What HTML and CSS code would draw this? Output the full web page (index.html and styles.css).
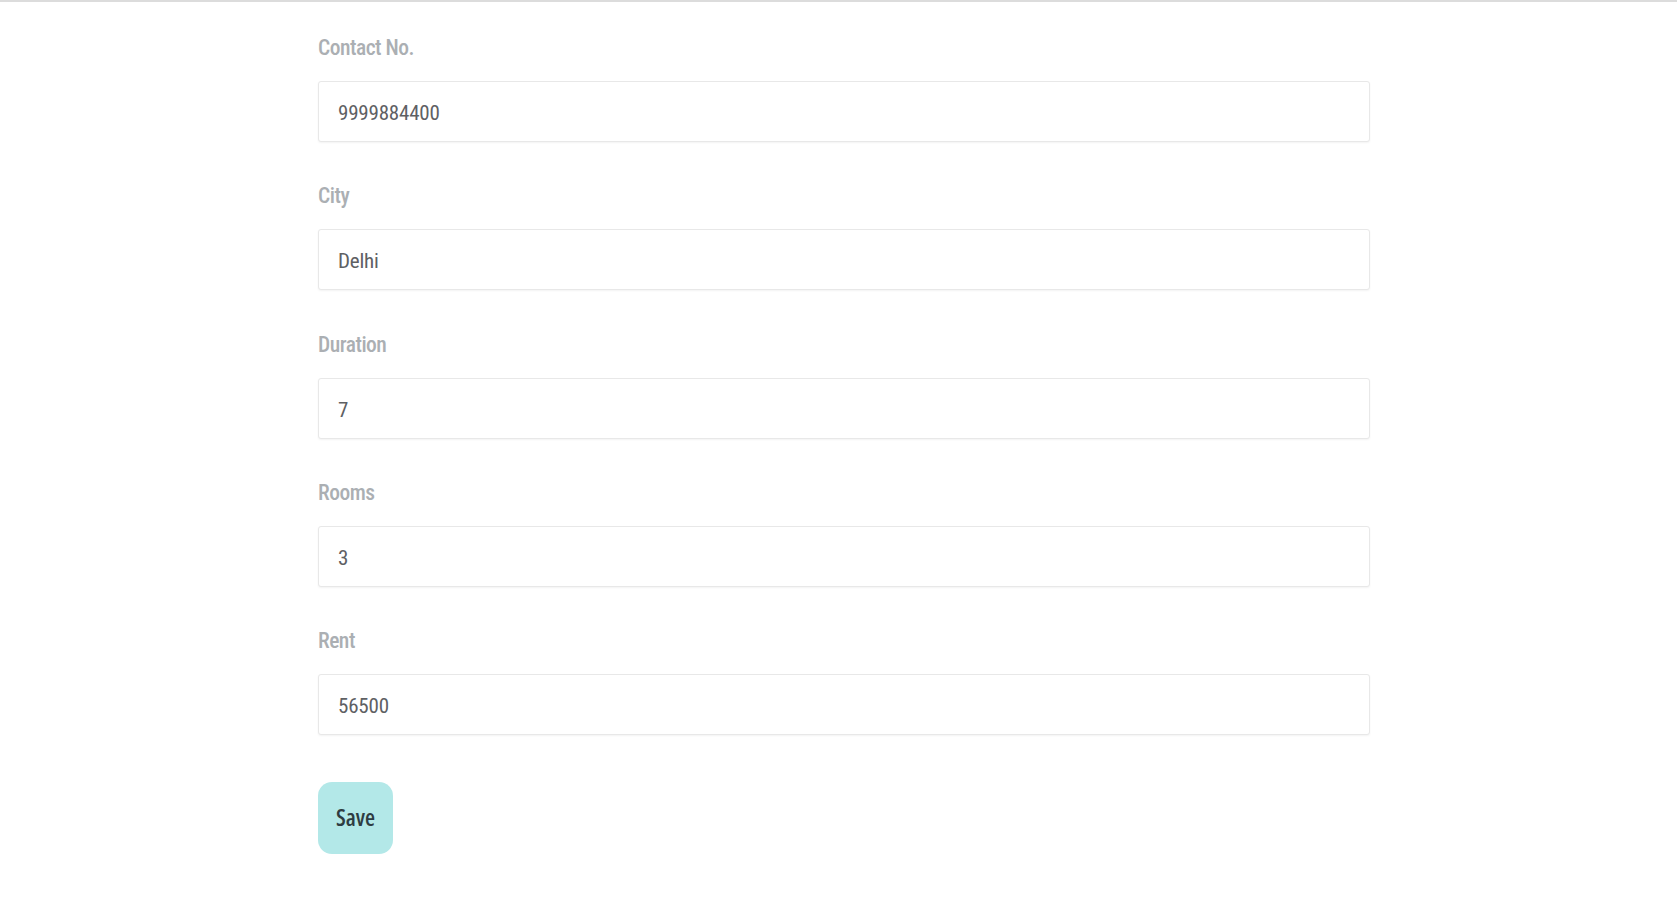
FILE: index.html
```html
<!DOCTYPE html>
<html lang="en">
<head>
<meta charset="utf-8">
<title>Edit Property</title>
<link rel="stylesheet" href="styles.css">
</head>
<body>
<div class="page">
  <form class="form">
    <div class="field">
      <label class="label" for="contact">Contact No.</label>
      <input class="input" id="contact" type="text" value="9999884400">
    </div>
    <div class="field">
      <label class="label" for="city">City</label>
      <input class="input" id="city" type="text" value="Delhi">
    </div>
    <div class="field">
      <label class="label" for="duration">Duration</label>
      <input class="input" id="duration" type="text" value="7">
    </div>
    <div class="field">
      <label class="label" for="rooms">Rooms</label>
      <input class="input" id="rooms" type="text" value="3">
    </div>
    <div class="field">
      <label class="label" for="rent">Rent</label>
      <input class="input" id="rent" type="text" value="56500">
    </div>
    <button class="btn-save" type="button">Save</button>
  </form>
</div>
</body>
</html>
```

FILE: styles.css
```css
html, body {
  margin: 0;
  padding: 0;
  background: #ffffff;
}

body {
  font-family: Roboto, "DejaVu Sans Condensed", sans-serif;
  font-stretch: 75%;
}

.page {
  border-top: 2px solid #dcdcdc;
  min-height: 900px;
  box-sizing: border-box;
}

.form {
  width: 1052px;
  margin-left: 318px;
  padding-top: 31px;
  display: flex;
  flex-direction: column;
  align-items: flex-start;
}

.field {
  width: 100%;
  display: flex;
  flex-direction: column;
  margin-bottom: 39.3px;
}

.label {
  display: block;
  padding-top: 2px;
  font-size: 21.5px;
  line-height: 26px;
  font-weight: 500;
  letter-spacing: -0.5px;
  color: #abafb3;
  margin-bottom: 20px;
}

.input {
  box-sizing: border-box;
  width: 100%;
  height: 61px;
  margin: 0;
  padding: 3px 19px 0 19px;
  border: 1px solid #e8e8e8;
  border-radius: 3px;
  box-shadow: 0 1px 2px rgba(0, 0, 0, 0.05);
  background: #ffffff;
  font-family: inherit;
  font-stretch: 75%;
  font-size: 21px;
  letter-spacing: -0.2px;
  color: #5e6063;
  outline: none;
}

.btn-save {
  margin-top: 8px;
  height: 72px;
  padding: 0 18px 3px;
  border: none;
  border-radius: 14px;
  background: #b3e8e8;
  color: #2e3c42;
  font-family: "Open Sans", sans-serif;
  font-stretch: 75%;
  font-size: 23px;
  font-weight: 600;
  cursor: pointer;
}
```
